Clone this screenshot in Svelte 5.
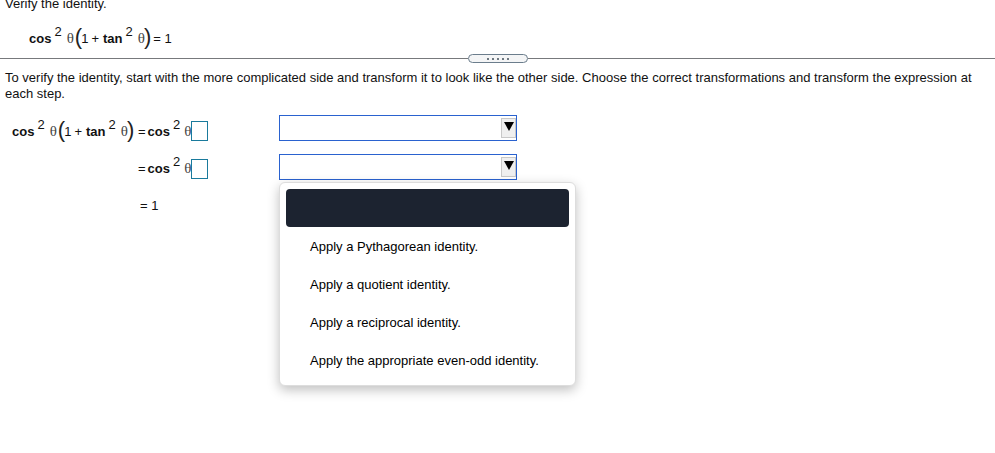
<script>
  const options = [
    "Apply a Pythagorean identity.",
    "Apply a quotient identity.",
    "Apply a reciprocal identity.",
    "Apply the appropriate even-odd identity."
  ];
</script>

<div class="page">
  <p class="prompt">Verify the identity.</p>

  <div class="given">
    <span class="fn">cos</span><sup>2</sup><span class="theta">θ</span><span class="paren">(</span><span>1</span><span class="plus">+</span><span class="fn">tan</span><sup>2</sup><span class="theta">θ</span><span class="paren close">)</span><span class="eq">= 1</span>
  </div>

  <div class="divider">
    <div class="line"></div>
    <div class="pill">
      <i></i><i></i><i></i><i></i><i></i>
    </div>
    <div class="line"></div>
  </div>

  <p class="intro">To verify the identity, start with the more complicated side and transform it to look like the other side. Choose the correct transformations and transform the expression at each step.</p>

  <div class="work">
    <div class="row first">
      <div class="lhs">
        <span class="fn">cos</span><sup>2</sup><span class="theta">θ</span><span class="paren">(</span><span>1</span><span class="plus">+</span><span class="fn">tan</span><sup>2</sup><span class="theta">θ</span><span class="paren close">)</span>
      </div>
      <div class="rhs">
        <span class="equals">=</span><span class="fn">cos</span><sup>2</sup><span class="theta">θ</span><span class="box"></span>
      </div>
      <div class="select"><span class="arrow"></span></div>
    </div>

    <div class="row second">
      <div class="lhs"></div>
      <div class="rhs">
        <span class="equals">=</span><span class="fn">cos</span><sup>2</sup><span class="theta">θ</span><span class="box"></span>
      </div>
      <div class="select-wrap">
        <div class="select"><span class="arrow"></span></div>
        <div class="menu">
          <div class="blank"></div>
          {#each options as option}
            <div class="option">{option}</div>
          {/each}
        </div>
      </div>
    </div>

    <div class="row third">
      <div class="lhs"></div>
      <div class="rhs result">= 1</div>
    </div>
  </div>
</div>

<style>
  :global(body) {
    margin: 0;
    background: #fff;
  }

  .page {
    height: 453px;
    overflow: hidden;
    font-family: "Liberation Sans", Arial, sans-serif;
    font-size: 13px;
    color: #111;
  }

  .prompt {
    margin: -4px 0 0 5px;
    line-height: 15px;
  }

  .given {
    display: flex;
    align-items: center;
    height: 30px;
    margin: 12px 0 0 29px;
    white-space: pre;
  }

  .fn {
    font-weight: bold;
  }

  .plus {
    margin: 0 4px 0 3px;
  }

  .eq {
    margin-left: 2px;
  }

  .equals {
    margin-right: 2px;
  }

  sup {
    font-size: 13px;
    line-height: 1;
    margin: 0 5px 0 3px;
    position: relative;
    top: -7px;
    vertical-align: baseline;
  }

  .theta {
    font-family: "Liberation Serif", serif;
    font-size: 15px;
    color: #444;
  }

  .paren {
    font-size: 22px;
    font-weight: normal;
    line-height: 20px;
    margin: 0 -1px 0 1px;
    position: relative;
    top: -1px;
    color: #222;
  }

  .close {
    margin: 0 0 0 -1px;
  }

  .divider {
    display: flex;
    align-items: center;
    margin-top: 1px;
    height: 9px;
  }

  .line {
    flex: 1;
    height: 1px;
    background: #77797c;
  }

  .pill {
    display: flex;
    align-items: center;
    justify-content: center;
    gap: 3px;
    width: 58px;
    height: 7px;
    border: 1px solid #6b7d8c;
    border-radius: 5px;
    background: #f4f5f6;
    box-sizing: content-box;
  }

  .pill i {
    width: 2px;
    height: 2px;
    background: #6e7880;
  }

  .intro {
    margin: 7px 16px 0 5px;
    line-height: 16px;
  }

  .work {
    margin-top: 13px;
  }

  .row {
    display: grid;
    grid-template-columns: 126px 141px auto;
    padding-left: 12px;
    align-items: center;
  }

  .first {
    height: 26px;
  }

  .second {
    height: 26px;
    margin-top: 13px;
  }

  .third {
    height: 16px;
    margin-top: 17px;
  }

  .lhs,
  .rhs {
    display: flex;
    align-items: center;
    white-space: pre;
  }

  .first .lhs,
  .first .rhs {
    padding-top: 6px;
  }

  .second .rhs {
    padding-top: 3px;
  }

  .rhs sup {
    margin-right: 4px;
  }

  .result {
    padding-left: 2px;
  }

  .box {
    box-sizing: border-box;
    width: 17px;
    height: 20px;
    border: 1px solid #1a7a9c;
  }

  .select-wrap {
    position: relative;
  }

  .select {
    position: relative;
    box-sizing: border-box;
    width: 238px;
    height: 26px;
    border: 1px solid #2a62cf;
    background: #fff;
  }

  .arrow {
    position: absolute;
    right: 0;
    top: 2px;
    width: 15px;
    height: 20px;
    background: #efefef;
    border: 1px solid #c8c8c8;
    box-sizing: border-box;
  }

  .arrow::after {
    content: "";
    position: absolute;
    left: 2px;
    top: 3px;
    border-left: 5px solid transparent;
    border-right: 5px solid transparent;
    border-top: 9px solid #000;
  }

  .menu {
    position: absolute;
    left: 0;
    top: 28px;
    width: 297px;
    height: 204px;
    box-sizing: border-box;
    padding: 6px;
    background: #fff;
    border: 1px solid #ddd;
    border-radius: 6px;
    box-shadow: 0 4px 12px rgba(0, 0, 0, 0.25);
  }

  .blank {
    height: 38px;
    border-radius: 4px;
    background: #1c2330;
  }

  .option {
    height: 38px;
    line-height: 39px;
    padding-left: 24px;
    color: #000;
  }
</style>
